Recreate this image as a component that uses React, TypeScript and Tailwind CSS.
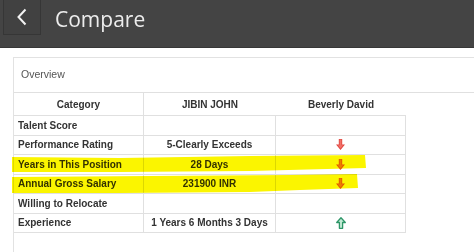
import React from 'react';

type Trend = 'down' | 'up' | null;

interface Row {
    label: string;
    value: string;
    trend: Trend;
    tone?: 'red' | 'orange';
}

const rows: Row[] = [
    { label: 'Talent Score', value: '', trend: null },
    { label: 'Performance Rating', value: '5-Clearly Exceeds', trend: 'down', tone: 'red' },
    { label: 'Years in This Position', value: '28 Days', trend: 'down', tone: 'orange' },
    { label: 'Annual Gross Salary', value: '231900 INR', trend: 'down', tone: 'orange' },
    { label: 'Willing to Relocate', value: '', trend: null },
    { label: 'Experience', value: '1 Years 6 Months 3 Days', trend: 'up' },
];

const DownArrow: React.FC<{ tone?: 'red' | 'orange' }> = ({ tone }) => {
    const fill = tone === 'orange' ? '#e65a18' : '#e0463f';
    return (
        <svg width="9" height="11" viewBox="0 0 9 11">
            <polygon points="2.8,0 6.2,0 6.2,5.5 9,5.5 4.5,11 0,5.5 2.8,5.5" fill={fill} />
            <polygon points="3.6,0.6 5.4,0.6 5.4,6.2 7.2,6.2 4.5,9.4 1.8,6.2 3.6,6.2" fill={tone === 'orange' ? '#f08238' : '#f27068'} />
        </svg>
    );
};

const UpArrow: React.FC = () => (
    <svg width="10" height="12" viewBox="0 0 10 12">
        <polygon points="5,0.7 9.3,5.5 6.6,5.5 6.6,11.3 3.4,11.3 3.4,5.5 0.7,5.5" fill="#c4ebd6" stroke="#2e9668" strokeWidth="1.3" strokeLinejoin="round" />
    </svg>
);

export default function App() {
    return (
        <div className="w-[474px] h-[252px] bg-white overflow-hidden relative" style={{ fontFamily: '"Liberation Sans", Arial, sans-serif' }}>
            {/* Header */}
            <div className="h-[48px] bg-[#444444] border-b border-[#373737] flex items-start">
                <button className="ml-[3px] w-[38px] h-[35px] bg-[#414141] border border-t-0 border-[#363636] flex items-center justify-center">
                    <svg width="12" height="18" viewBox="0 0 12 18">
                        <polyline points="9.5,1.5 2.5,9 9.5,16.5" fill="none" stroke="#f2f2f2" strokeWidth="2" />
                    </svg>
                </button>
                <div className="ml-[14px] pt-[4px] text-[21px] text-[#ededed]" style={{ fontFamily: '"Open Sans", "Noto Sans", sans-serif' }}>
                    Compare
                </div>
            </div>

            {/* Panel */}
            <div className="pt-[9px] pl-[13px]">
                <div className="border-l border-t border-[#e2e2e2] h-[200px]">
                    <div className="h-[34px] flex items-center pl-[7px] text-[10.5px] text-[#555555]">Overview</div>
                    <div className="border-t border-[#e0e0e0] h-[23px] flex text-[10px] font-bold text-[#333333]">
                        <div className="w-[130px] border-r border-[#e0e0e0] flex items-center justify-center">Category</div>
                        <div className="w-[132px] flex items-center justify-center">JIBIN JOHN</div>
                        <div className="w-[130px] flex items-center justify-center">Beverly David</div>
                    </div>
                    <div className="w-[392px] border-t border-[#e0e0e0]">
                        {rows.map(row => (
                            <div key={row.label} className="h-[19.5px] flex border-b border-[#e0e0e0] text-[10px] font-bold text-[#333333]">
                                <div className="w-[130px] border-r border-[#e0e0e0] flex items-center pl-[4px]">{row.label}</div>
                                <div className="w-[132px] border-r border-[#e0e0e0] flex items-center justify-center">{row.value}</div>
                                <div className="w-[130px] border-r border-[#e0e0e0] flex items-center justify-center">
                                    {row.trend === 'down' && <DownArrow tone={row.tone} />}
                                    {row.trend === 'up' && <UpArrow />}
                                </div>
                            </div>
                        ))}
                    </div>
                </div>
            </div>

            {/* Marker highlights */}
            <svg className="absolute left-0 top-0 pointer-events-none mix-blend-multiply" width="474" height="252">
                <polygon points="12,157 120,158 250,156 365,155 366,168 250,171 120,172 12,172" fill="#fbf500" />
                <polygon points="12,177 150,176 290,175 357,174 358,188 300,190 250,192 120,193 12,193" fill="#fbf500" />
            </svg>
        </div>
    );
}
